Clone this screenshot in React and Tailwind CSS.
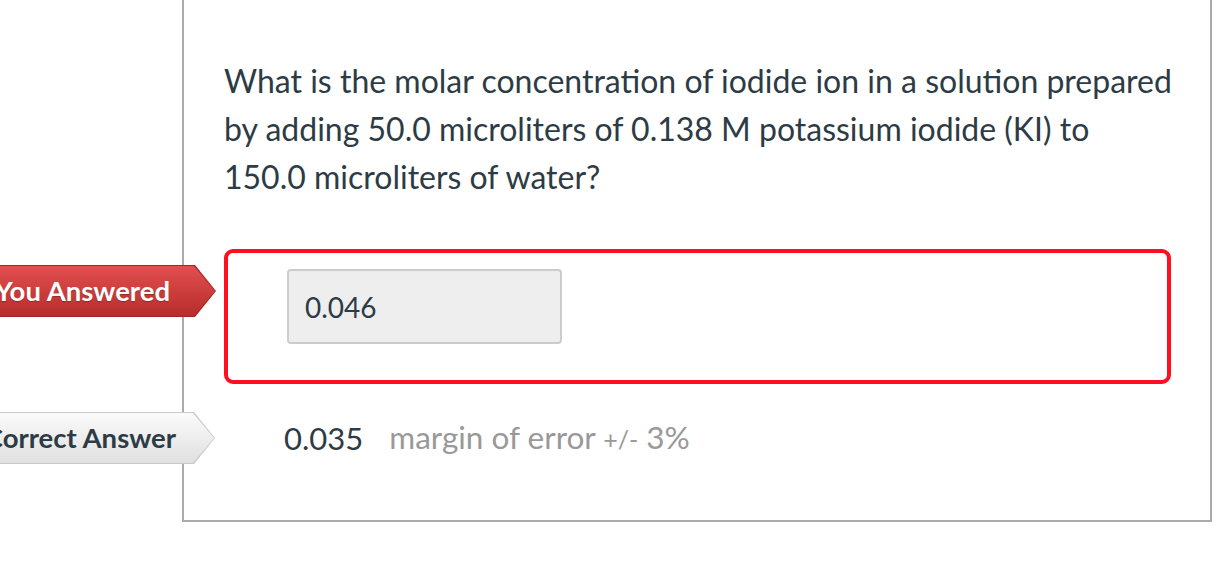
import React from 'react';

const font = { fontFamily: 'Lato, "Open Sans", sans-serif' };

function Tag({ children, variant, className }) {
  const red = variant === 'red';
  return (
    <div className={`absolute h-[52px] ${className}`}>
      <div
        className={`h-full [clip-path:polygon(0_0,calc(100%-21px)_0,100%_50%,calc(100%-21px)_100%,0_100%)] ${
          red ? 'bg-[#a82424]' : 'bg-[#c9c9c9]'
        }`}
      >
        <div
          className={`absolute inset-[1px] [clip-path:polygon(0_0,calc(100%-21px)_0,100%_50%,calc(100%-21px)_100%,0_100%)] bg-gradient-to-b ${
            red ? 'from-[#e24f4f] to-[#b72c2c]' : 'from-[#fbfbfb] to-[#e0e0e0]'
          }`}
        />
        <div
          className={`relative flex h-full items-center whitespace-nowrap pl-[20px] text-[27.5px] font-bold ${
            red ? 'pr-[46px] text-white [text-shadow:0_1px_1px_rgba(0,0,0,0.25)]' : 'pr-[39px] text-[#2d3b45]'
          }`}
        >
          {children}
        </div>
      </div>
    </div>
  );
}

export default function App() {
  return (
    <div className="flex h-[572px] w-[1222px] overflow-hidden bg-white" style={font}>
      <div className="w-[182px] shrink-0" />
      <div className="h-[522px] w-[1030px] shrink-0 border-x-2 border-b-2 border-[#aaaaaa] pl-[40px] pt-[57px]">
        <p className="w-[951px] text-[32px] leading-[48px] text-[#2d3b45]">
          What is the molar concentration of iodide ion in a solution prepared by adding 50.0 microliters of 0.138 M
          potassium iodide (KI) to 150.0 microliters of water?
        </p>

        <div className="relative mt-[48px] h-[135px] w-[947px] rounded-[9px] border-4 border-[#ff0f1f] pl-[59px] pt-[16px]">
          <Tag variant="red" className="right-full top-[12px] mr-[12px]">
            You Answered
          </Tag>
          <div className="flex h-[75px] w-[275px] items-center rounded-[4px] border-2 border-[#cccccc] bg-[#eeeeee] pl-[16px] text-[28px] text-[#2d3b45]">
            0.046
          </div>
        </div>

        <div className="relative mt-[28px] flex h-[52px] items-center pl-[60px]">
          <Tag variant="gray" className="right-full top-0 mr-[9px]">
            Correct Answer
          </Tag>
          <span className="text-[31px] text-[#2d3b45]">0.035</span>
          <span className="ml-[26px] text-[31.5px] text-[#999999]">
            margin of error <span className="text-[25px]">+/-</span> 3%
          </span>
        </div>
      </div>
    </div>
  );
}
